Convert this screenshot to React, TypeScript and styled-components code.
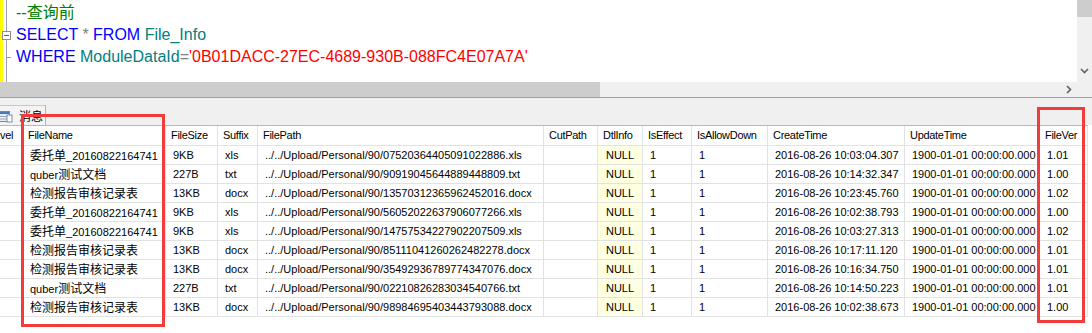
import React from "react";
import styled, { createGlobalStyle } from "styled-components";

const GlobalStyle = createGlobalStyle`
  html, body {
    margin: 0;
    padding: 0;
    background: #ffffff;
    overflow: hidden;
  }
  * {
    box-sizing: border-box;
  }
`;

const COLUMNS = [
  { label: "vel", width: 23 },
  { label: "FileName", width: 143 },
  { label: "FileSize", width: 52 },
  { label: "Suffix", width: 40 },
  { label: "FilePath", width: 286 },
  { label: "CutPath", width: 54 },
  { label: "DtlInfo", width: 45, nullCol: true },
  { label: "IsEffect", width: 49 },
  { label: "IsAllowDown", width: 76 },
  { label: "CreateTime", width: 137 },
  { label: "UpdateTime", width: 135 },
  { label: "FileVer", width: 48 },
];

const ROWS = [
  ["委托单_20160822164741", "9KB", "xls", "../../Upload/Personal/90/07520364405091022886.xls", "2016-08-26 10:03:04.307", "1.01"],
  ["quber测试文档", "227B", "txt", "../../Upload/Personal/90/90919045644889448809.txt", "2016-08-26 10:14:32.347", "1.00"],
  ["检测报告审核记录表", "13KB", "docx", "../../Upload/Personal/90/13570312365962452016.docx", "2016-08-26 10:23:45.760", "1.02"],
  ["委托单_20160822164741", "9KB", "xls", "../../Upload/Personal/90/56052022637906077266.xls", "2016-08-26 10:02:38.793", "1.00"],
  ["委托单_20160822164741", "9KB", "xls", "../../Upload/Personal/90/14757534227902207509.xls", "2016-08-26 10:03:27.313", "1.02"],
  ["检测报告审核记录表", "13KB", "docx", "../../Upload/Personal/90/85111041260262482278.docx", "2016-08-26 10:17:11.120", "1.01"],
  ["检测报告审核记录表", "13KB", "docx", "../../Upload/Personal/90/35492936789774347076.docx", "2016-08-26 10:16:34.750", "1.01"],
  ["quber测试文档", "227B", "txt", "../../Upload/Personal/90/02210826283034540766.txt", "2016-08-26 10:14:50.223", "1.01"],
  ["检测报告审核记录表", "13KB", "docx", "../../Upload/Personal/90/98984695403443793088.docx", "2016-08-26 10:02:38.673", "1.00"],
];

function toCells(r: string[]) {
  return ["", r[0], r[1], r[2], r[3], "", "NULL", "1", "1", r[4], "1900-01-01 00:00:00.000", r[5]];
}

// windows draws the CJK fallback a bit bigger than the latin text
function withCjk(text: string) {
  return text.split(/([\u4e00-\u9fff]+)/).map((part, i) =>
    /[\u4e00-\u9fff]/.test(part) ? <Cjk key={i}>{part}</Cjk> : part
  );
}

function App() {
  return (
    <>
      <GlobalStyle />
      <Page>
        <EditorPane>
          <Editor>
            <Gutter>
              <svg width="14" height="82" viewBox="0 0 14 82">
                <rect x="0" y="0" width="3" height="82" fill="#ffff00" />
                <line x1="6.5" y1="0" x2="6.5" y2="82" stroke="#a0a0a0" />
                <rect x="2.5" y="31.5" width="8" height="8" fill="#fff" stroke="#909090" />
                <line x1="4" y1="35.5" x2="9" y2="35.5" stroke="#606060" />
                <line x1="6.5" y1="57.5" x2="11" y2="57.5" stroke="#a0a0a0" />
              </svg>
            </Gutter>
            <Code>
              <Line>
                <Tok $c="#008000">--查询前</Tok>
              </Line>
              <Line>
                <Tok $c="#0000ff">SELECT</Tok> <Tok $c="#808080">*</Tok>{" "}
                <Tok $c="#0000ff">FROM</Tok> <Tok $c="#008080">File_Info</Tok>
              </Line>
              <Line>
                <Tok $c="#0000ff">WHERE</Tok> <Tok $c="#008080">ModuleDataId</Tok>
                <Tok $c="#808080">=</Tok>
                <Tok $c="#ff0000">'0B01DACC-27EC-4689-930B-088FC4E07A7A'</Tok>
              </Line>
            </Code>
          </Editor>
          <VScroll>
            <VThumb />
            <svg width="15" height="10" viewBox="0 0 15 10">
              <path d="M4 3 L7.5 6.5 L11 3" fill="none" stroke="#606060" strokeWidth="1.6" />
            </svg>
          </VScroll>
          <HScroll>
            <HThumb />
            <svg width="10" height="15" viewBox="0 0 10 15">
              <path d="M3 4 L6.5 7.5 L3 11" fill="none" stroke="#606060" strokeWidth="1.6" />
            </svg>
          </HScroll>
          <Corner />
        </EditorPane>
        <TabStrip>
          <Tab>
            <svg width="13" height="14" viewBox="0 0 13 14">
              <rect x="-3.5" y="2.5" width="13" height="10" fill="#e8f0fa" stroke="#6d86a8" />
              <rect x="-3" y="3" width="12" height="2" fill="#4a78c0" />
              <line x1="-2" y1="7.5" x2="8" y2="7.5" stroke="#9aa9bd" />
              <line x1="-2" y1="10" x2="8" y2="10" stroke="#9aa9bd" />
              <rect x="7" y="6" width="5" height="7" fill="#fff" stroke="#7a8ca6" />
            </svg>
            <TabLabel>消息</TabLabel>
          </Tab>
        </TabStrip>
        <Grid>
          {COLUMNS.map((c) => (
            <HeadCell key={c.label} $w={c.width}>
              {c.label}
            </HeadCell>
          ))}
          {ROWS.map((r, i) =>
            toCells(r).map((v, j) => (
              <Cell key={`${i}-${j}`} $w={COLUMNS[j].width} $null={!!COLUMNS[j].nullCol}>
                {withCjk(v)}
              </Cell>
            ))
          )}
        </Grid>
        <Marker style={{ left: 21, top: 114, width: 144, height: 213 }} />
        <Marker style={{ left: 1037, top: 107, width: 48, height: 216 }} />
      </Page>
    </>
  );
}

const Page = styled.div`
  position: relative;
  width: 1092px;
  height: 333px;
  overflow: hidden;
  background: #ffffff;
  font-family: "Liberation Sans", Arial, "Noto Sans CJK SC", sans-serif;
`;

const EditorPane = styled.div`
  display: grid;
  grid-template-columns: 1fr 15px;
  grid-template-rows: 82px 15px;
  height: 98px;
  border-bottom: 1px solid #a0a0a0;
`;

const Editor = styled.div`
  display: flex;
  background: #ffffff;
  overflow: hidden;
`;

const Gutter = styled.div`
  width: 14px;
  flex: none;
  svg {
    display: block;
  }
`;

const Code = styled.div`
  padding-top: 2px;
  padding-left: 2px;
  font-family: "Liberation Sans", Arial, "Noto Sans CJK SC", sans-serif;
  font-size: 16px;
  line-height: 22px;
  white-space: pre;
`;

const Line = styled.div`
  height: 22px;
`;

const Tok = styled.span<{ $c: string }>`
  color: ${(p) => p.$c};
`;

const VScroll = styled.div`
  background: #f0f0f0;
  display: flex;
  flex-direction: column;
  justify-content: space-between;
  svg {
    display: block;
    margin-bottom: 6px;
  }
`;

const VThumb = styled.div`
  height: 17px;
  background: #cdcdcd;
`;

const HScroll = styled.div`
  background: #f0f0f0;
  display: flex;
  justify-content: space-between;
  align-items: stretch;
  svg {
    display: block;
    margin-right: 3px;
  }
`;

const HThumb = styled.div`
  width: 600px;
  background: #cdcdcd;
`;

const Corner = styled.div`
  background: #f0f0f0;
`;

const TabStrip = styled.div`
  height: 27px;
  background: #f0f0f0;
  display: flex;
  align-items: flex-end;
`;

const Tab = styled.div`
  display: flex;
  align-items: center;
  gap: 6px;
  width: 46px;
  height: 20px;
  border-top: 1px solid #c8c8c8;
  border-right: 1px solid #b4b4b4;
  background: #f4f4f4;
  svg {
    display: block;
    flex: none;
  }
`;

const TabLabel = styled.span`
  font-family: "Noto Sans CJK SC", sans-serif;
  font-size: 12px;
  line-height: 18px;
  color: #000;
  white-space: nowrap;
`;

const Grid = styled.div`
  display: grid;
  grid-template-columns: ${COLUMNS.map((c) => c.width + "px").join(" ")};
  grid-template-rows: 20px repeat(${ROWS.length}, 19px);
  border-top: 1px solid #b8b8b8;
  background: #ffffff;
  width: 1088px;
`;

const HeadCell = styled.div<{ $w: number }>`
  width: ${(p) => p.$w}px;
  padding-left: 5px;
  border-right: 1px solid #e2e2e2;
  border-bottom: 1px solid #e2e2e2;
  font-size: 11px;
  letter-spacing: -0.3px;
  line-height: 19px;
  color: #000;
  white-space: nowrap;
  overflow: hidden;
  &:first-child {
    padding-left: 0;
  }
`;

const Cell = styled.div<{ $w: number; $null: boolean }>`
  width: ${(p) => p.$w}px;
  padding-left: ${(p) => (p.$null ? 0 : 7)}px;
  text-align: ${(p) => (p.$null ? "center" : "left")};
  background: ${(p) => (p.$null ? "#ffffe1" : "#ffffff")};
  border-right: 1px solid #e2e2e2;
  border-bottom: 1px solid #e2e2e2;
  font-family: "Liberation Sans", Arial, "Noto Sans CJK SC", sans-serif;
  font-size: 11px;
  line-height: 18px;
  color: #000;
  white-space: nowrap;
  overflow: hidden;
`;

const Cjk = styled.span`
  font-family: "Noto Sans CJK SC", sans-serif;
  font-size: 12px;
  line-height: 18px;
`;

const Marker = styled.div`
  position: absolute;
  border: 3px solid #f23b3b;
  pointer-events: none;
`;

export default App;
